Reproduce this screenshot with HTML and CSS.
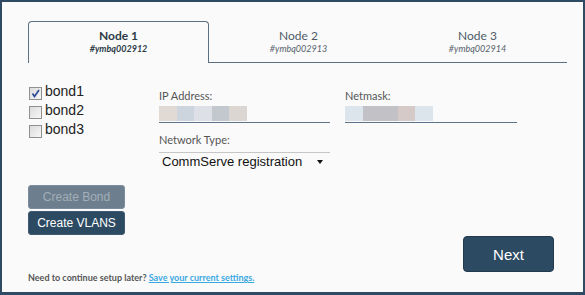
FILE: index.html
```html
<!DOCTYPE html>
<html lang="en">
<head>
    <meta charset="UTF-8">
    <meta name="viewport" content="width=device-width, initial-scale=1.0">
    <title>Network Setup</title>
    <link rel="stylesheet" href="styles.css">
</head>
<body>
    <div class="frame">
        <div class="tabs">
            <div class="tab active">
                <div class="tab-name">Node 1</div>
                <div class="tab-id">#ymbq002912</div>
            </div>
            <div class="tab">
                <div class="tab-name">Node 2</div>
                <div class="tab-id">#ymbq002913</div>
            </div>
            <div class="tab">
                <div class="tab-name">Node 3</div>
                <div class="tab-id">#ymbq002914</div>
            </div>
        </div>

        <div class="content">
            <div class="side">
                <ul class="bonds">
                    <li>
                        <span class="box">
                            <svg width="11" height="11" viewBox="0 0 11 11"><path d="M2.5 5.5 L4.5 8.5 L9 2" fill="none" stroke="#2d4b98" stroke-width="1.7"/></svg>
                        </span>
                        bond1
                    </li>
                    <li><span class="box"></span>bond2</li>
                    <li><span class="box"></span>bond3</li>
                </ul>
                <button class="btn btn-disabled">Create Bond</button>
                <button class="btn">Create VLANS</button>
            </div>

            <div class="fields">
                <div class="field">
                    <label>IP Address:</label>
                    <div class="value">
                        <span class="px c1"></span><span class="px c2"></span><span class="px c3"></span><span class="px c4"></span><span class="px c5"></span>
                    </div>
                </div>
                <div class="field">
                    <label>Netmask:</label>
                    <div class="value">
                        <span class="px c6"></span><span class="px c7"></span><span class="px c7"></span><span class="px c8"></span><span class="px c6"></span>
                    </div>
                </div>
                <div class="field">
                    <label>Network Type:</label>
                    <div class="select">
                        <span>CommServe registration</span>
                        <span class="caret"></span>
                    </div>
                </div>
            </div>
        </div>

        <div class="actions">
            <button class="btn btn-next">Next</button>
        </div>

        <p class="footer">Need to continue setup later? <a href="#">Save your current settings.</a></p>
    </div>
</body>
</html>
```

FILE: styles.css
```css
html, body {
    margin: 0;
    padding: 0;
}
body {
    font-family: Lato, "Liberation Sans", sans-serif;
    color: #4f5a63;
}
.frame {
    box-sizing: border-box;
    width: 585px;
    height: 295px;
    border: 2px solid #2f4b63;
    border-bottom-width: 3px;
    background-color: #fafafa;
    padding: 19px 16px 0 26px;
}

/* node tabs */
.tabs {
    display: flex;
    width: 539px;
    height: 42px;
}
.tab {
    flex: 1;
    box-sizing: border-box;
    text-align: center;
    padding-top: 7px;
    border-bottom: 1px solid #5b7083;
}
.tab.active {
    border: 1px solid #5b7083;
    border-bottom: none;
    border-radius: 4px 4px 0 0;
    padding-top: 6px;
}
.tab-name {
    font-size: 12px;
    line-height: 15px;
    color: #4d5a66;
}
.tab-id {
    font-size: 9px;
    line-height: 12px;
    font-style: italic;
    color: #56616b;
}
.tab.active .tab-name,
.tab.active .tab-id {
    font-weight: bold;
    color: #2c3a47;
}

.content {
    display: flex;
    align-items: flex-start;
    margin-top: 18px;
}
.side {
    width: 131px;
}
.bonds {
    list-style: none;
    margin: 0 0 47px;
    padding: 0;
}
.bonds li {
    display: flex;
    align-items: center;
    height: 19px;
    font-family: "Liberation Sans", Arial, sans-serif;
    font-size: 14px;
    color: #222;
}
.box {
    box-sizing: border-box;
    display: inline-flex;
    align-items: center;
    justify-content: center;
    width: 13px;
    height: 13px;
    margin: 5px 3px 0 1px;
    border: 1px solid #8f9090;
    background: linear-gradient(135deg, #dcdcdc, #f7f7f7);
}

.btn {
    display: block;
    box-sizing: border-box;
    width: 97px;
    height: 24px;
    margin-bottom: 2px;
    padding: 0;
    font-family: "Liberation Sans", Arial, sans-serif;
    font-size: 12px;
    color: #fff;
    background-color: #2d4a63;
    border: 1px solid #3f5a72;
    border-radius: 3px;
}
.btn-disabled {
    background-color: #6d7f8e;
    color: #a3aeb8;
    border-color: #7d8d9b;
}

/* form fields */
.fields {
    display: grid;
    grid-template-columns: 171px 172px;
    column-gap: 15px;
    row-gap: 10px;
    margin-top: 8px;
}
.field label {
    display: block;
    font-size: 11px;
    line-height: 14px;
    color: #555;
}
.value {
    display: flex;
    margin-top: 3px;
    padding-bottom: 1px;
    border-bottom: 1px solid #5d7388;
}
.px {
    width: 17.5px;
    height: 15px;
}
.c1 { background-color: #e1dad4; }
.c2 { background-color: #ccd4dd; }
.c3 { background-color: #dde0e7; }
.c4 { background-color: #c3c7ce; }
.c5 { background-color: #dcd6d2; }
.c6 { background-color: #dce5eb; }
.c7 { background-color: #c2c2c6; }
.c8 { background-color: #d5cac7; }

.select {
    display: flex;
    align-items: center;
    justify-content: space-between;
    margin-top: 5px;
    padding: 1px 7px 0 3px;
    border-top: 1px solid #c6c6c6;
    font-family: "Liberation Sans", Arial, sans-serif;
    font-size: 13px;
    line-height: 16px;
    color: #111;
}
.caret {
    width: 0;
    height: 0;
    border-left: 3.5px solid transparent;
    border-right: 3.5px solid transparent;
    border-top: 4px solid #111;
}

.actions {
    display: flex;
    justify-content: flex-end;
    padding-right: 13px;
    margin-top: -1px;
}
.btn-next {
    width: 91px;
    height: 36px;
    margin: 0;
    font-size: 15px;
    border-color: #23394d;
    border-radius: 4px;
}

.footer {
    margin: 0;
    font-size: 9px;
    line-height: 12px;
    font-weight: bold;
    color: #555;
}
.footer a {
    color: #3aa9e2;
}
```
